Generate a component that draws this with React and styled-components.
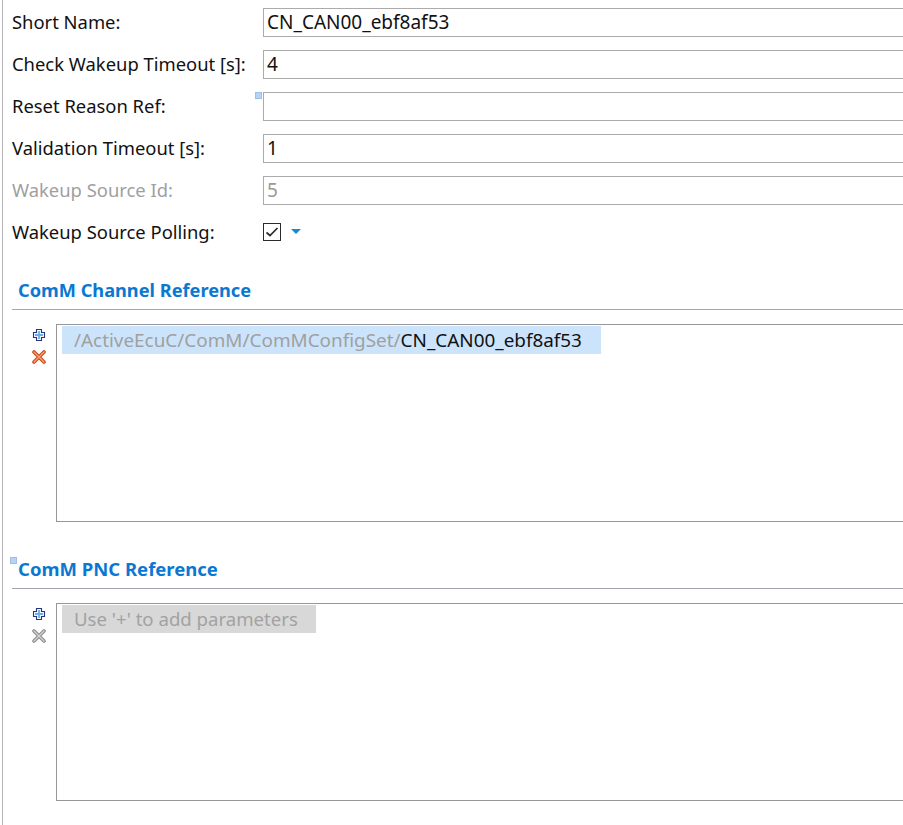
import React from 'react';
import styled, { createGlobalStyle } from 'styled-components';

const GlobalStyle = createGlobalStyle`
	html, body {
		margin: 0;
		padding: 0;
		background: white;
		overflow: hidden;
	}
	body {
		font-family: "Noto Sans", "Open Sans", sans-serif;
		font-size: 18.4px;
		color: #111;
	}
`;

const Page = styled.div`
	width: 903px;
	height: 825px;
	box-sizing: border-box;
	margin-left: 2px;
	border-left: 1px solid #b4b4b8;
	padding: 8px 0 0 9px;
	overflow: hidden;
`;

const Form = styled.div`
	display: flex;
	flex-direction: column;
	gap: 13px;
`;

const Row = styled.div`
	display: flex;
	align-items: center;
	height: 29px;
`;

const Label = styled.div`
	width: 251px;
	margin-top: -2px;
	white-space: nowrap;
	color: ${p => (p.$disabled ? '#a0a0a0' : '#111')};
`;

const InputWrap = styled.div`
	position: relative;
	flex: 1;
`;

const Input = styled.div`
	box-sizing: border-box;
	height: 29px;
	margin-right: -2px;
	border: 1px solid #ababab;
	border-right: none;
	padding-left: 3px;
	font-size: 19px;
	line-height: 26px;
	color: ${p => (p.$disabled ? '#9a9a9a' : '#111')};
`;

const Marker = styled.svg`
	position: absolute;
	width: 7px;
	height: 7px;
	left: ${p => p.$left}px;
	top: ${p => p.$top}px;
`;

const Check = styled.div`
	width: 18px;
	height: 18px;
	box-sizing: border-box;
	border: 1px solid #2b2b2b;
	display: flex;
	align-items: center;
	justify-content: center;
`;

const CheckRow = styled(Row)`
	margin-top: -1px;

	${Label} {
		margin-top: 0;
	}
`;

const Caret = styled.div`
	width: 0;
	height: 0;
	margin: 0 0 1px 10px;
	border-left: 5px solid transparent;
	border-right: 5px solid transparent;
	border-top: 5px solid #1a86d8;
`;

const Section = styled.section`
	position: relative;
	margin-top: ${p => p.$top}px;
`;

const Title = styled.h2`
	margin: 0;
	padding-left: 6px;
	height: 30px;
	line-height: 30px;
	font-size: ${p => p.$size}px;
	font-weight: 700;
	color: #0a78d2;
	white-space: nowrap;
`;

const Rule = styled.div`
	height: 1px;
	margin-top: 4px;
	margin-right: -10px;
	background: #a6a6ac;
`;

const Body = styled.div`
	display: flex;
	margin-top: 14px;
`;

const Tools = styled.div`
	width: 44px;
	box-sizing: border-box;
	padding: 4px 0 0 20px;
	display: flex;
	flex-direction: column;
	gap: 8px;
`;

const ListBox = styled.div`
	flex: 1;
	box-sizing: border-box;
	height: 198px;
	margin-right: -2px;
	border: 1px solid #97979b;
	border-right: none;
	padding: 1px 0 0 5px;
`;

const ListItem = styled.div`
	box-sizing: border-box;
	width: ${p => p.$width}px;
	height: 28px;
	line-height: 28px;
	padding-left: 12px;
	font-size: ${p => (p.$empty ? 18.6 : 18.9)}px;
	white-space: nowrap;
	background: ${p => (p.$empty ? '#d8d8d8' : '#cce4fb')};
	color: ${p => (p.$empty ? '#a2a2a2' : '#111')};
`;

const PathPrefix = styled.span`
	color: #a0a0a0;
`;

const MarkerIcon = ({ left, top }) => (
	<Marker $left={left} $top={top} viewBox="0 0 7 7">
		<rect x="1" y="1" width="5" height="5" fill="#b4d4f6" />
		<rect x="0.5" y="0.5" width="6" height="6" fill="none" stroke="#3f7fc0" strokeWidth="1" strokeDasharray="1 1" />
	</Marker>
);

const PlusIcon = () => (
	<svg width="14" height="14" viewBox="0 0 14 14">
		<path d="M4.500 1.500h5v3h3v5h-3v3h-5v-3h-3v-5h3z" fill="#f2f8fe" stroke="#27357f" strokeWidth="1.100" />
		<path d="M7 3v8M3 7h8" stroke="#6aaee8" strokeWidth="1.800" />
	</svg>
);

const RemoveIcon = ({ disabled }) => (
	<svg width="14" height="14" viewBox="0 0 14 14">
		<path d="M2 2l10 10M12 2L2 12" stroke={disabled ? '#8e8e8e' : '#d2461a'} strokeWidth="3.600" strokeLinecap="round" />
		<path d="M2 2l10 10M12 2L2 12" stroke={disabled ? '#d4d4d4' : '#f6a878'} strokeWidth="1.300" strokeLinecap="round" />
	</svg>
);

const fields = [
	{ label: 'Short Name:', value: 'CN_CAN00_ebf8af53' },
	{ label: 'Check Wakeup Timeout [s]:', value: '4' },
	{ label: 'Reset Reason Ref:', value: '', marker: true },
	{ label: 'Validation Timeout [s]:', value: '1' },
	{ label: 'Wakeup Source Id:', value: '5', disabled: true },
];

const App = () => (
	<Page>
		<GlobalStyle />
		<Form>
			{fields.map(field => (
				<Row key={field.label}>
					<Label $disabled={field.disabled}>{field.label}</Label>
					<InputWrap>
						{field.marker && <MarkerIcon left={-8} top={0} />}
						<Input $disabled={field.disabled}>{field.value}</Input>
					</InputWrap>
				</Row>
			))}
			<CheckRow>
				<Label>Wakeup Source Polling:</Label>
				<Check>
					<svg width="14" height="12" viewBox="0 0 14 12">
						<path d="M1.500 6.500l3.500 3L12.500 2" fill="none" stroke="#2b2b2b" strokeWidth="1.700" />
					</svg>
				</Check>
				<Caret />
			</CheckRow>
		</Form>
		<Section $top={29}>
			<Title $size={18.2}>ComM Channel Reference</Title>
			<Rule />
			<Body>
				<Tools>
					<PlusIcon />
					<RemoveIcon />
				</Tools>
				<ListBox>
					<ListItem $width={539}>
						<PathPrefix>/ActiveEcuC/ComM/ComMConfigSet/</PathPrefix>CN_CAN00_ebf8af53
					</ListItem>
				</ListBox>
			</Body>
		</Section>
		<Section $top={32}>
			<MarkerIcon left={-2} top={3} />
			<Title $size={18.5}>ComM PNC Reference</Title>
			<Rule />
			<Body>
				<Tools>
					<PlusIcon />
					<RemoveIcon disabled />
				</Tools>
				<ListBox>
					<ListItem $width={254} $empty>Use '+' to add parameters</ListItem>
				</ListBox>
			</Body>
		</Section>
	</Page>
);

export default App;
